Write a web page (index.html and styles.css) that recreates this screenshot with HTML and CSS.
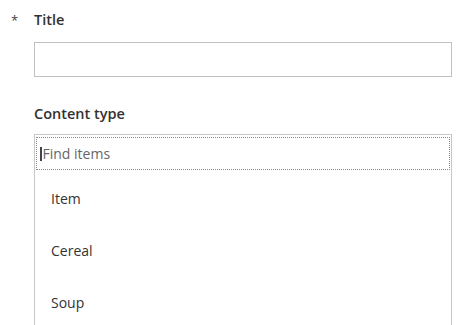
FILE: index.html
```html
<!DOCTYPE html>
<html>
<head>
<meta charset="utf-8">
<link rel="stylesheet" href="styles.css">
</head>
<body>
<div class="form">
  <div class="field">
    <div class="req">*</div>
    <div class="body">
      <div class="label">Title</div>
      <div class="textbox"></div>
    </div>
  </div>
  <div class="field second">
    <div class="req"></div>
    <div class="body">
      <div class="label">Content type</div>
      <div class="dropdown">
        <div class="search"><span class="caret"></span><span class="placeholder">Find items</span></div>
        <ul class="options">
          <li>Item</li>
          <li>Cereal</li>
          <li>Soup</li>
        </ul>
      </div>
    </div>
  </div>
</div>
</body>
</html>
```
FILE: styles.css
```css
html, body {
  margin: 0;
  padding: 0;
  background: #fff;
  height: 325px;
  overflow: hidden;
}
body {
  font-family: "Open Sans", "Noto Sans", sans-serif;
  color: #333;
}
.form {
  padding-top: 10px;
  width: 452px;
}
.field {
  display: flex;
}
.second {
  margin-top: 27px;
}
.req {
  width: 34px;
  box-sizing: border-box;
  padding-left: 11px;
  font-size: 13px;
  line-height: 20px;
  color: #444;
}
.body {
  flex: 1;
}
.label {
  font-size: 14.5px;
  font-weight: 600;
  line-height: 20px;
  color: #323130;
}
.textbox {
  margin-top: 12px;
  height: 35px;
  box-sizing: border-box;
  border: 1px solid #c2c2c2;
}
.dropdown {
  margin-top: 10px;
  border: 1px solid #c8c8c8;
  border-bottom: none;
  height: 200px;
  padding: 2px 1px 0 1px;
}
.search {
  height: 33px;
  box-sizing: border-box;
  border: 1px dotted #8a8a8a;
  display: flex;
  align-items: center;
  padding-left: 3px;
}
.caret {
  width: 1.5px;
  height: 14px;
  background: #444;
  margin-right: 1px;
}
.placeholder {
  font-size: 14px;
  color: #666;
}
.options {
  list-style: none;
  margin: 0;
  padding: 3px 0 0 0;
}
.options li {
  height: 52px;
  line-height: 52px;
  padding-left: 15px;
  font-size: 14px;
  color: #333;
}
```
